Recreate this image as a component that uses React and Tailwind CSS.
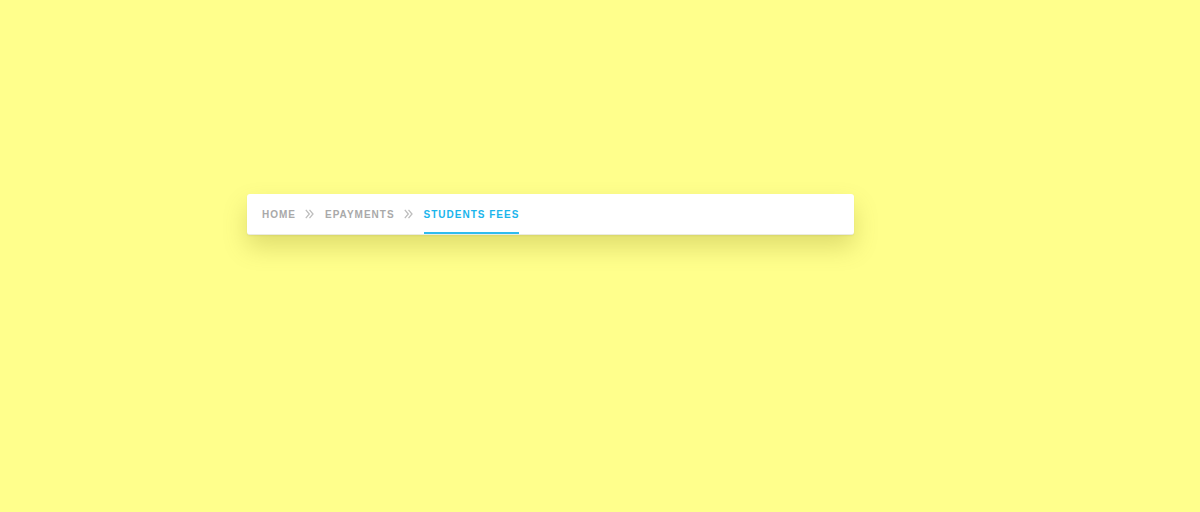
import React from "react";

const crumbs = [
  { name: "Home", active: false },
  { name: "ePayments", active: false },
  { name: "Students Fees", active: true },
];

const Chevrons = () => (
  <svg width="9" height="10" viewBox="0 0 9 10" className="ml-[9px] mr-[11px] text-[#bdbdbd]" fill="none" stroke="currentColor" strokeWidth="1.3">
    <path d="M0.8 0.8 L4.3 5 L0.8 9.2" />
    <path d="M4.5 0.8 L8 5 L4.5 9.2" />
  </svg>
);

export default function App() {
  return (
    <div className="min-h-[512px] w-full bg-[#ffff8c] pt-[194px] pl-[247px]" style={{ fontFamily: '"Liberation Sans", Arial, sans-serif' }}>
      <nav className="w-[607px] h-[41px] bg-white rounded-[3px] border-b border-[#ebebe0] shadow-[0_12px_24px_rgba(110,100,0,0.22),0_1px_2px_rgba(0,0,0,0.06)] px-[15px] flex items-stretch">
        <ol className="flex items-stretch">
          {crumbs.map((c, i) => (
            <li key={i} className="flex items-center">
              {i > 0 && <Chevrons />}
              <a
                href="#"
                className={`h-full flex items-center text-[10px] font-bold uppercase tracking-[1px] border-b-2 pt-[2px] ${
                  c.active ? "text-[#1ab5ec] border-[#2fbcef]" : "text-[#a9a9a9] border-transparent"
                }`}
              >
                {c.name}
              </a>
            </li>
          ))}
        </ol>
      </nav>
    </div>
  );
}
